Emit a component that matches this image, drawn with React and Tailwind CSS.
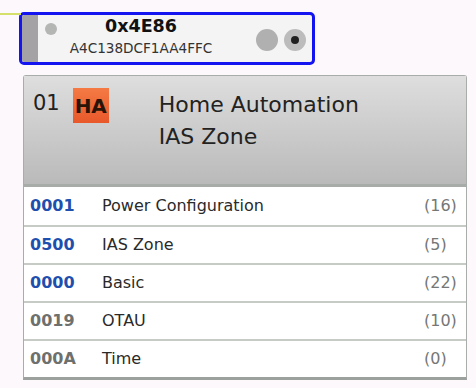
const clusters = [
  { id: '0001', name: 'Power Configuration', count: 16, active: true },
  { id: '0500', name: 'IAS Zone', count: 5, active: true },
  { id: '0000', name: 'Basic', count: 22, active: true },
  { id: '0019', name: 'OTAU', count: 10, active: false },
  { id: '000A', name: 'Time', count: 0, active: false },
];

export default function App() {
  return (
    <div
      className="relative w-[476px] h-[388px] overflow-hidden bg-[#fcf8fc] pt-[12px]"
      style={{ fontFamily: '"DejaVu Sans", sans-serif' }}
    >
      {/* link line to neighbour node */}
      <div className="absolute left-0 top-[13px] w-[21px] h-[2px] bg-[#d4e06a]" />

      <div className="ml-[19px] w-[296px] h-[53px] flex items-center rounded-[5px] border-[3px] border-[#1414f0] bg-[#f4f4f4] overflow-hidden">
        <div className="w-[16px] h-full bg-[#a4a2a4]" />
        <div className="self-start mt-[8px] ml-[7px] w-[12px] h-[12px] rounded-full bg-[#b4b6b4]" />
        <div className="flex-1 flex flex-col items-center leading-none -ml-[31px]">
          <span className="text-[17.5px] font-bold text-[#111] -mt-[3px]">0x4E86</span>
          <span className="text-[13.6px] text-[#333] mt-[6px]">A4C138DCF1AA4FFC</span>
        </div>
        <div className="flex items-center gap-[6px] mr-[6px] mt-[3px]">
          <div className="w-[22px] h-[22px] rounded-full bg-[#b0b0b0]" />
          <div className="w-[22px] h-[22px] rounded-full bg-[#bcbcbc] flex items-center justify-center">
            <div className="w-[8px] h-[8px] rounded-full bg-[#202020]" />
          </div>
        </div>
      </div>

      <div className="ml-[23px] mt-[10px] w-[444px] rounded-t-[3px] border border-[#a9ada9] border-b-[3px] border-b-[#9da19d] bg-white">
        <div className="h-[111px] flex items-start bg-gradient-to-b from-[#dedede] to-[#b9bab9] border-b-[3px] border-[#a8aca8] pt-[12px]">
          <span className="ml-[9px] mt-[5px] text-[21px] leading-none text-[#222]">01</span>
          <span className="ml-[13px] w-[36px] h-[35px] flex items-center justify-center text-[20px] font-bold text-[#2a1408] bg-gradient-to-b from-[#f47a44] to-[#e8582a]">
            HA
          </span>
          <div className="ml-[50px] mt-[1px] text-[22px] leading-[32px] text-[#222]">
            <div>Home Automation</div>
            <div>IAS Zone</div>
          </div>
        </div>
        {clusters.map((c, i) => (
          <div
            key={c.id}
            className={`h-[38px] flex items-center text-[16px] ${i > 0 ? 'border-t-2 border-[#c6cbc6]' : ''}`}
          >
            <span className={`w-[78px] pl-[6px] font-bold ${c.active ? 'text-[#1f4fae]' : 'text-[#6e706e]'}`}>{c.id}</span>
            <span className="flex-1 text-[#2a2a2a]">{c.name}</span>
            <span className="w-[42px] text-left text-[#757775]">({c.count})</span>
          </div>
        ))}
      </div>
    </div>
  );
}
